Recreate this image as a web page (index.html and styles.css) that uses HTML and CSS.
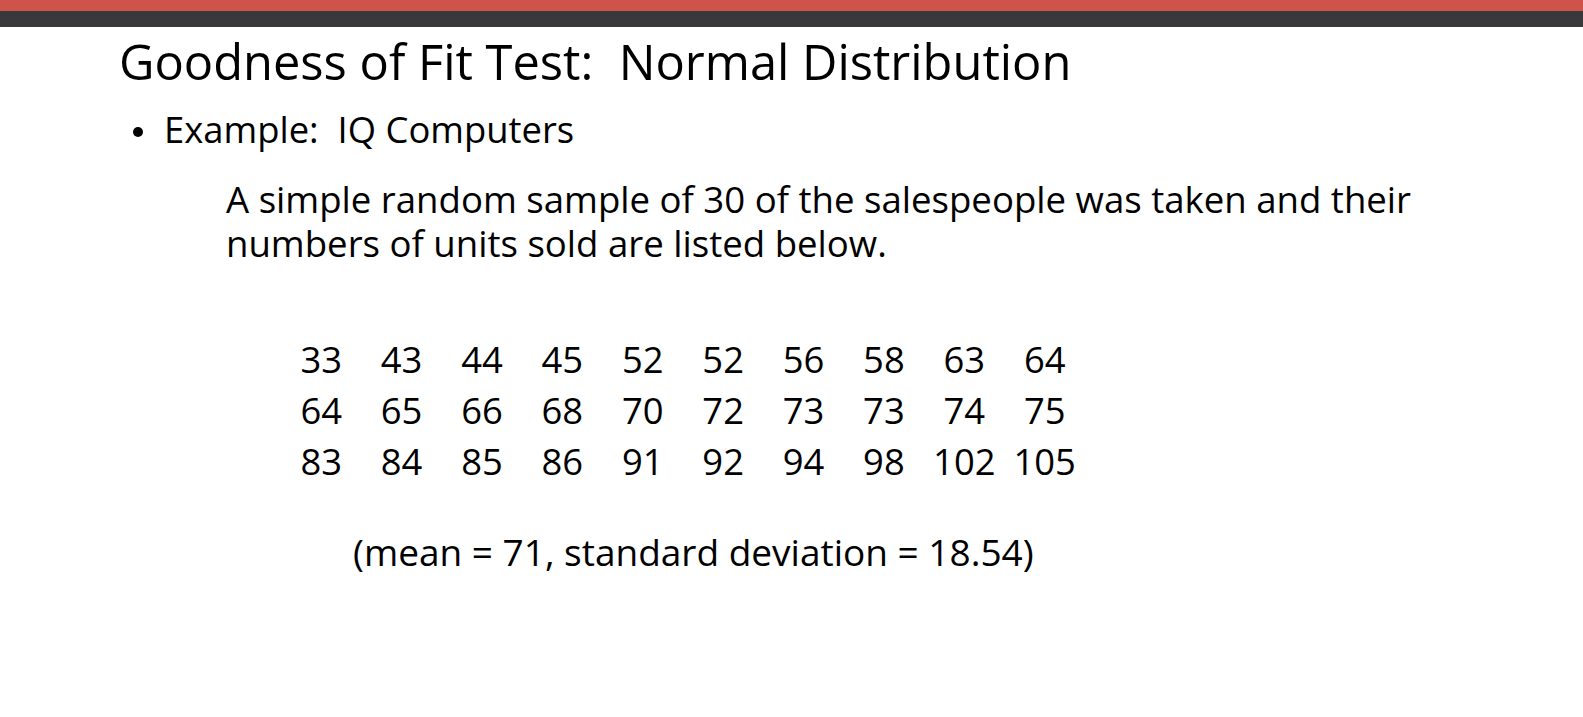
FILE: index.html
```html
<!DOCTYPE html>
<html lang="en">
<head>
<meta charset="utf-8">
<title>Goodness of Fit Test: Normal Distribution</title>
<link rel="stylesheet" href="styles.css">
</head>
<body>
<div class="slide">
  <div class="bar-red"></div>
  <div class="bar-dark"></div>
  <h1 class="title">Goodness of Fit Test:&nbsp; Normal Distribution</h1>
  <ul class="bullets">
    <li class="bullet">Example:&nbsp; IQ Computers</li>
  </ul>
  <p class="para"><span class="line">A simple random sample of 30 of the salespeople was taken and their</span><span class="line">numbers of units sold are listed below.</span></p>
  <div class="data">
    <span>33</span><span>43</span><span>44</span><span>45</span><span>52</span><span>52</span><span>56</span><span>58</span><span>63</span><span>64</span>
    <span>64</span><span>65</span><span>66</span><span>68</span><span>70</span><span>72</span><span>73</span><span>73</span><span>74</span><span>75</span>
    <span>83</span><span>84</span><span>85</span><span>86</span><span>91</span><span>92</span><span>94</span><span>98</span><span>102</span><span>105</span>
  </div>
  <p class="stats">(mean = 71, standard deviation = 18.54)</p>
</div>
</body>
</html>
```
FILE: styles.css
```css
html, body {
  margin: 0;
  padding: 0;
  background: #ffffff;
}

body {
  font-family: "Open Sans", "Liberation Sans", sans-serif;
  color: #000000;
}

.slide {
  width: 1583px;
  height: 717px;
  display: flex;
  flex-direction: column;
  overflow: hidden;
}

.bar-red {
  height: 11px;
  background: #cd534b;
}

.bar-dark {
  height: 16px;
  background: #39393b;
}

.title {
  margin: 4px 0 0 119px;
  font-size: 48.8px;
  line-height: 60px;
  font-weight: 400;
  white-space: nowrap;
}

.bullets {
  list-style: none;
  margin: 16px 0 0 0;
  padding: 0;
}

.bullet {
  position: relative;
  padding-left: 164px;
  font-size: 36.4px;
  line-height: 44px;
  white-space: nowrap;
}

.bullet::before {
  content: "";
  position: absolute;
  left: 133px;
  top: 20px;
  width: 10px;
  height: 10px;
  border-radius: 50%;
  background: #000000;
}

.para {
  margin: 26px 0 0 226px;
  display: flex;
  flex-direction: column;
  font-size: 36.6px;
  line-height: 44px;
  white-space: nowrap;
}

.data {
  margin: 69px 0 0 281px;
  display: grid;
  grid-template-columns: repeat(10, 80.4px);
  font-size: 36.4px;
  line-height: 51px;
  text-align: center;
  width: max-content;
}

.stats {
  margin: 43px 0 0 353px;
  font-size: 37px;
  line-height: 44px;
  white-space: nowrap;
}
```
